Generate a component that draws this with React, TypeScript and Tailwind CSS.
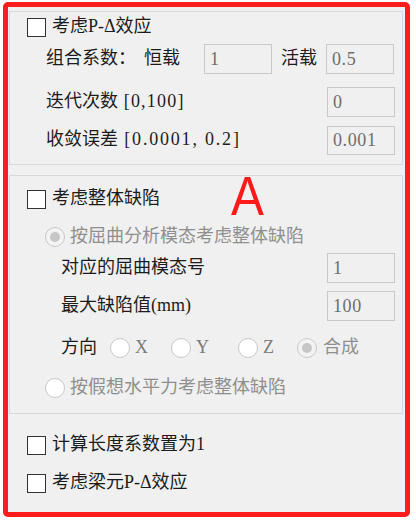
import React from 'react'

const font = { fontFamily: '"Liberation Serif", "Noto Sans CJK SC", serif' }

const CheckBox = () => (
  <div className="w-[19px] h-[19px] shrink-0 border border-[#333333] bg-white" />
)

const Radio = ({ checked = false }: { checked?: boolean }) => (
  <div
    className={
      checked
        ? 'w-[20px] h-[20px] shrink-0 rounded-full border border-[#c8c8c8] bg-[#f3f3f3] flex items-center justify-center'
        : 'w-[20px] h-[20px] shrink-0 rounded-full border border-[#c8c8c8] bg-white'
    }
  >
    {checked && <div className="w-[10px] h-[10px] rounded-full bg-[#c6c6c6]" />}
  </div>
)

const Field = ({ value, w = 'w-[68px]' }: { value: string; w?: string }) => (
  <div className={`${w} h-full shrink-0 border border-[#c9c9c9] bg-[#f0f0f0] flex items-center pl-[5px] text-[#6d6d6d] tracking-[0.6px]`}>
    {value}
  </div>
)

const Label = ({ children, className = '' }: { children: React.ReactNode; className?: string }) => (
  <span className={`leading-none pb-[3px] whitespace-pre ${className}`}>{children}</span>
)

const App = () => {
  return (
    <div className="relative w-[416px] h-[520px] bg-white text-[18px] text-[#1c1c1c]" style={font}>
      <div className="ml-[3px] mt-[2px] w-[407px] h-[515px] border-[5px] border-[#fe1c1c] rounded-[5px] bg-[#f0f0f0] flex flex-col">

        {/* P-Delta group */}
        <div className="ml-[1px] mt-[4px] w-[394px] h-[154px] border border-[#d9d9d9] flex flex-col">
          <div className="h-[30px] flex items-center pl-[17px] gap-[6px]">
            <CheckBox />
            <Label>考虑P-Δ效应</Label>
          </div>

          <div className="mt-[2px] h-[30px] flex items-center pl-[36px]">
            <Label className="w-[98px]">组合系数：</Label>
            <Label className="w-[60px]">恒载</Label>
            <Field value="1" />
            <Label className="ml-[9px] w-[45px]">活载</Label>
            <Field value="0.5" />
          </div>

          <div className="mt-[13px] h-[30px] flex items-center pl-[36px] pr-[7px]">
            <Label>
              迭代次数<span className="tracking-[1.2px]"> [0,100]</span>
            </Label>
            <div className="ml-auto h-full">
              <Field value="0" />
            </div>
          </div>

          <div className="mt-[9px] h-[29px] flex items-center pl-[36px] pr-[7px]">
            <Label>
              收敛误差<span className="tracking-[1.8px]"> [0.0001, 0.2]</span>
            </Label>
            <div className="ml-auto h-full">
              <Field value="0.001" />
            </div>
          </div>
        </div>

        {/* imperfection group */}
        <div className="ml-[1px] mt-[10px] w-[394px] h-[239px] border border-[#d9d9d9] flex flex-col">
          <div className="mt-[8px] h-[30px] flex items-center pl-[17px] gap-[6px]">
            <CheckBox />
            <Label>考虑整体缺陷</Label>
          </div>

          <div className="mt-[8px] h-[30px] flex items-center pl-[35px] gap-[5px] text-[#8f8f8f]">
            <Radio checked />
            <Label>按屈曲分析模态考虑整体缺陷</Label>
          </div>

          <div className="mt-[1px] h-[30px] flex items-center pl-[51px] pr-[7px]">
            <Label>对应的屈曲模态号</Label>
            <div className="ml-auto h-full">
              <Field value="1" />
            </div>
          </div>

          <div className="mt-[8px] h-[30px] flex items-center pl-[51px] pr-[7px]">
            <Label>最大缺陷值(mm)</Label>
            <div className="ml-auto h-full">
              <Field value="100" />
            </div>
          </div>

          <div className="mt-[12px] h-[30px] flex items-center pl-[51px]">
            <Label className="w-[49px]">方向</Label>
            <div className="w-[61px] flex items-center gap-[5px] text-[#7a7a7a]">
              <Radio />
              <Label>X</Label>
            </div>
            <div className="w-[67px] flex items-center gap-[5px] text-[#7a7a7a]">
              <Radio />
              <Label>Y</Label>
            </div>
            <div className="w-[59px] flex items-center gap-[5px] text-[#7a7a7a]">
              <Radio />
              <Label>Z</Label>
            </div>
            <div className="flex items-center gap-[6px] text-[#8f8f8f]">
              <Radio checked />
              <Label>合成</Label>
            </div>
          </div>

          <div className="mt-[10px] h-[30px] flex items-center pl-[35px] gap-[5px] text-[#8f8f8f]">
            <Radio />
            <Label>按假想水平力考虑整体缺陷</Label>
          </div>
        </div>

        <div className="mt-[16px] h-[30px] flex items-center pl-[19px] gap-[6px]">
          <CheckBox />
          <Label>计算长度系数置为1</Label>
        </div>
        <div className="mt-[8px] h-[30px] flex items-center pl-[19px] gap-[6px]">
          <CheckBox />
          <Label>考虑梁元P-Δ效应</Label>
        </div>
      </div>

      <div
        className="absolute left-[231px] top-[166px] text-[56px] leading-none text-[#ff1a1a] scale-x-[0.88] origin-left"
        style={{ fontFamily: '"Liberation Sans", Arial, sans-serif' }}
      >
        A
      </div>
    </div>
  )
}

export default App
